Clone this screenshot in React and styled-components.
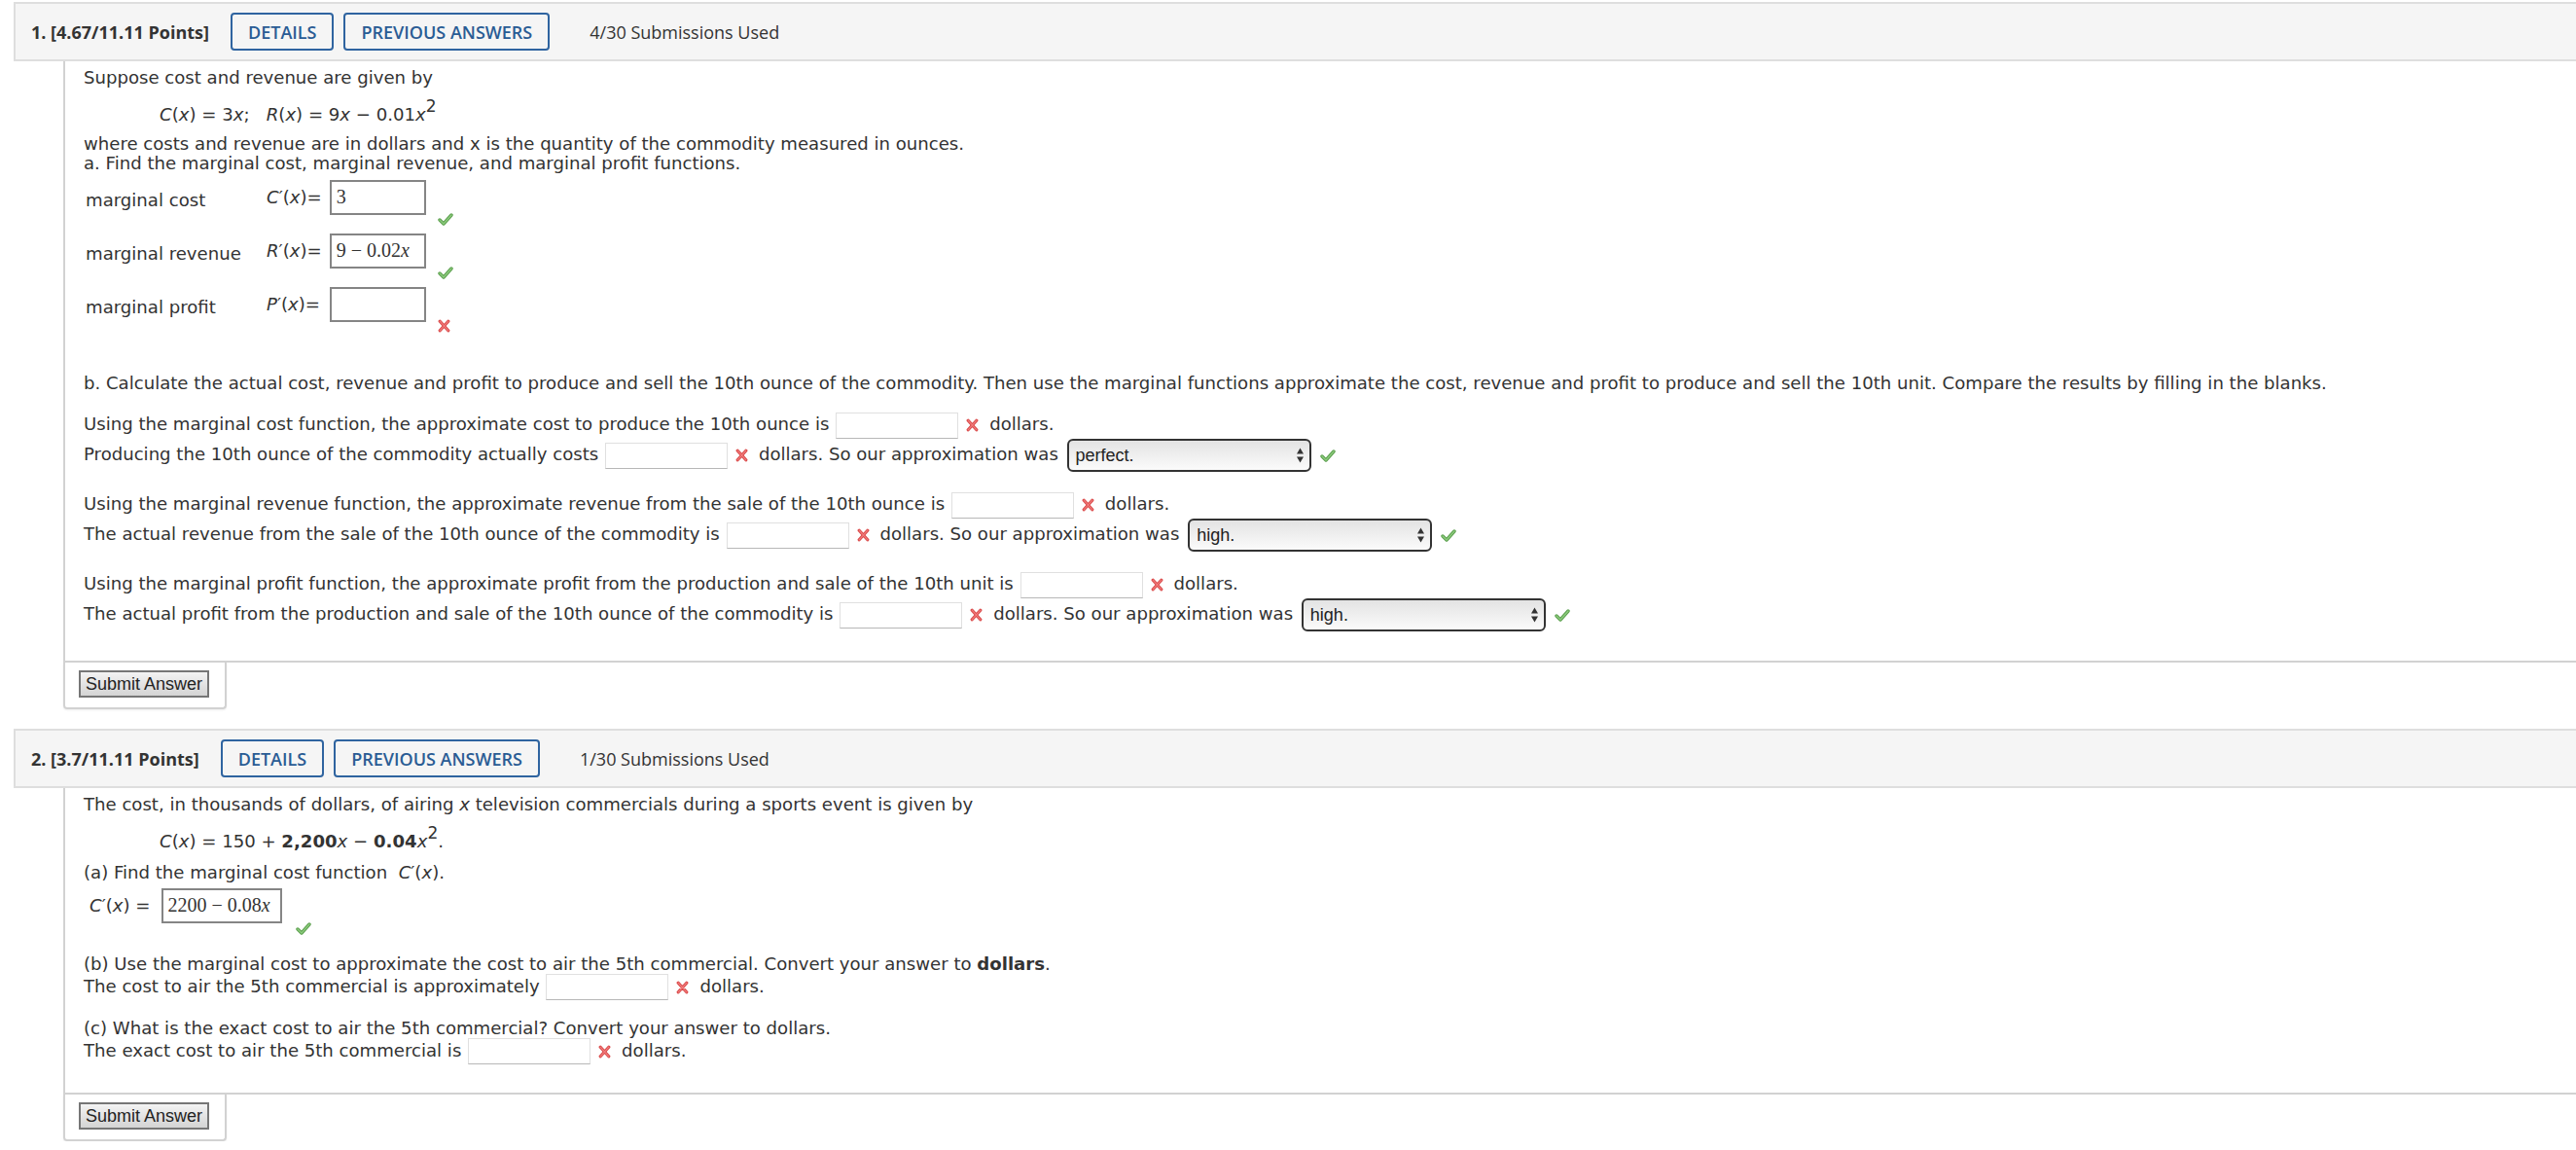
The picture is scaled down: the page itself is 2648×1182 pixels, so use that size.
import React from "react";
import styled, { createGlobalStyle } from "styled-components";

const GlobalStyle = createGlobalStyle`
  html, body {
    margin: 0;
    padding: 0;
    background: #fff;
    overflow-x: hidden;
  }
  body {
    font-family: "DejaVu Sans", Verdana, sans-serif;
    font-size: 18.1px;
    line-height: 20px;
    color: #333;
  }
`;

const Page = styled.div`
  padding: 2px 0 0 14px;
  display: flex;
  flex-direction: column;
  gap: 20px;
`;

const Question = styled.section`
  width: calc(100% + 40px);
`;

// question header bar
const QHeader = styled.div`
  display: flex;
  align-items: center;
  background: #f5f5f5;
  border: 2px solid #dedede;
  padding: 9px 16px;
  font-family: "Open Sans", "Liberation Sans", sans-serif;
  font-size: 18px;
  color: #333;
`;

const QTitle = styled.span`
  font-weight: 700;
  margin-right: 22px;
`;

const HeaderButton = styled.button`
  height: 39px;
  padding: 0 16px;
  margin-right: 10px;
  border: 2px solid #2f64a0;
  border-radius: 4px;
  background: transparent;
  font-family: "Open Sans", "Liberation Sans", sans-serif;
  font-weight: 600;
  font-size: 18px;
  color: #2a5c94;
`;

const Submissions = styled.span`
  margin-left: 31px;
`;

const QBody = styled.div`
  margin-left: 51px;
  border-left: 2px solid #d2d2d2;
  border-bottom: 2px solid #d2d2d2;
  padding: ${(p) => p.$pt}px 0 ${(p) => p.$pb}px 19px;
`;

const QFooter = styled.div`
  margin-left: 51px;
  width: fit-content;
  border: 2px solid #d2d2d2;
  border-top: none;
  border-radius: 0 0 4px 4px;
  padding: 8px 16px 10px 14px;
  box-shadow: 0 1px 2px rgba(0, 0, 0, 0.08);
`;

const SubmitButton = styled.button`
  display: block;
  height: 28px;
  padding: 0 5px;
  border: 2px solid #767676;
  background: linear-gradient(#f3f3f3, #d4d4d4);
  font-family: "Liberation Sans", Arial, sans-serif;
  font-size: 18px;
  color: #222;
`;

const Para = styled.p`
  margin: ${(p) => p.$mt || 0}px 0 ${(p) => p.$mb || 0}px;
`;

const Formula = styled.div`
  padding-left: 78px;
  margin: ${(p) => p.$mt}px 0 ${(p) => p.$mb}px;
  white-space: pre;
`;

const Var = styled.i`
  font-style: italic;
`;

const Bold = styled.b`
  font-weight: 700;
`;

const Sup = styled.span`
  font-size: 17px;
  line-height: 0;
  vertical-align: 9px;
`;

// part a: label / function / math box / mark
const FnGrid = styled.div`
  display: grid;
  grid-template-columns: 188px auto auto auto;
  justify-content: start;
  align-items: start;
  row-gap: 8px;
  margin: ${(p) => p.$mt}px 0 ${(p) => p.$mb}px;
`;

const FnRow = styled.div`
  display: flex;
  align-items: flex-start;
  margin: ${(p) => p.$mt}px 0 ${(p) => p.$mb || 0}px;
`;

const FnLabel = styled.span`
  line-height: 36px;
  padding: 3px 0 0 2px;
`;

const FnName = styled.span`
  line-height: 36px;
  padding: 0 ${(p) => p.$pr || 8}px 0 ${(p) => p.$pl || 0}px;
  white-space: pre;
`;

const MathBox = styled.span`
  box-sizing: border-box;
  width: ${(p) => p.$w}px;
  height: 36px;
  border: 2px solid #858585;
  padding: 0 5px;
  font-family: "Liberation Serif", "DejaVu Serif", serif;
  font-size: 20px;
  line-height: 30px;
  color: #333;
  white-space: pre;
`;

const FnMark = styled.span`
  display: flex;
  align-items: center;
  height: 14px;
  margin: ${(p) => p.$mt || 33}px 0 0 ${(p) => p.$ml || 12}px;
`;

const Group = styled.div`
  margin-top: ${(p) => p.$mt}px;
`;

const Line = styled.div`
  line-height: ${(p) => p.$lh || 30}px;
  white-space: nowrap;
`;

const Blank = styled.span`
  display: inline-block;
  vertical-align: middle;
  box-sizing: border-box;
  width: ${(p) => p.$w || 126}px;
  height: 27px;
  border: 1px solid #e0e0e0;
  border-bottom-color: #b7b7b7;
  background: #fff;
  margin-left: 1px;
`;

const InlineMark = styled.span`
  display: inline-block;
  vertical-align: middle;
  line-height: 0;
  margin: 0 ${(p) => p.$mr || 0}px 0 ${(p) => p.$ml || 0}px;
`;

const SelectBox = styled.span`
  display: inline-flex;
  align-items: center;
  justify-content: space-between;
  vertical-align: middle;
  box-sizing: border-box;
  width: 251px;
  height: 34px;
  margin-left: 3px;
  padding: 0 5px 0 7px;
  border: 2px solid #333;
  border-radius: 6px;
  background: linear-gradient(#e3e3e3, #fbfbfb);
  font-family: "Liberation Sans", Arial, sans-serif;
  font-size: 18px;
  line-height: 1;
  color: #222;
`;

function Check() {
  return (
    <svg width="16" height="13" viewBox="0 0 16 13">
      <path d="M2 7 L6 11 L14 2" fill="none" stroke="#5b9f4d" strokeWidth="3.4" strokeLinecap="round" strokeLinejoin="round" />
      <path d="M2 7 L6 11 L14 2" fill="none" stroke="#8ccb7d" strokeWidth="1.4" strokeLinecap="round" strokeLinejoin="round" />
    </svg>
  );
}

function Cross() {
  return (
    <svg width="13" height="14" viewBox="0 0 13 14">
      <path d="M2.2 2.2 L10.8 11.8 M10.8 2.2 L2.2 11.8" fill="none" stroke="#d94a4a" strokeWidth="3.2" strokeLinecap="round" />
      <path d="M2.2 2.2 L10.8 11.8 M10.8 2.2 L2.2 11.8" fill="none" stroke="#f27c7c" strokeWidth="1.2" strokeLinecap="round" />
    </svg>
  );
}

function Arrows() {
  return (
    <svg width="9" height="18" viewBox="0 0 9 18">
      <path d="M1 7.5 L4.5 1.5 L8 7.5 Z M1 10.5 L4.5 16.5 L8 10.5 Z" fill="#333" />
    </svg>
  );
}

function Answer({ w }) {
  return (
    <>
      <Blank $w={w} />
      <InlineMark $ml={8} $mr={11}>
        <Cross />
      </InlineMark>
    </>
  );
}

function Choice({ value }) {
  return (
    <>
      <SelectBox>
        <span>{value}</span>
        <Arrows />
      </SelectBox>
      <InlineMark $ml={9}>
        <Check />
      </InlineMark>
    </>
  );
}

function Header({ title, used }) {
  return (
    <QHeader>
      <QTitle>{title}</QTitle>
      <HeaderButton>DETAILS</HeaderButton>
      <HeaderButton>PREVIOUS ANSWERS</HeaderButton>
      <Submissions>{used}</Submissions>
    </QHeader>
  );
}

function Footer() {
  return (
    <QFooter>
      <SubmitButton>Submit Answer</SubmitButton>
    </QFooter>
  );
}

const fnRows = [
  { label: "marginal cost", fn: "C", value: "3", ok: true },
  { label: "marginal revenue", fn: "R", value: "9 \u2212 0.02", x: true, ok: true },
  { label: "marginal profit", fn: "P", value: "", ok: false },
];

function QuestionOne() {
  return (
    <Question>
      <Header title="1.  [4.67/11.11 Points]" used="4/30 Submissions Used" />
      <QBody $pt={7} $pb={30}>
        <Para>Suppose cost and revenue are given by</Para>
        <Formula $mt={18} $mb={10}>
          <Var>C</Var>(<Var>x</Var>) = 3<Var>x</Var>;   <Var>R</Var>(<Var>x</Var>) = 9<Var>x</Var> {"\u2212"} 0.01<Var>x</Var>
          <Sup>2</Sup>
        </Formula>
        <Para>
          where costs and revenue are in dollars and x is the quantity of the commodity measured in ounces.
          <br />
          a. Find the marginal cost, marginal revenue, and marginal profit functions.
        </Para>
        <FnGrid $mt={7} $mb={42}>
          {fnRows.map((r) => (
            <React.Fragment key={r.fn}>
              <FnLabel>{r.label}</FnLabel>
              <FnName>
                <Var>{r.fn}</Var>′(<Var>x</Var>)=
              </FnName>
              <MathBox $w={99}>
                {r.value}
                {r.x && <i>x</i>}
              </MathBox>
              <FnMark>{r.ok ? <Check /> : <Cross />}</FnMark>
            </React.Fragment>
          ))}
        </FnGrid>
        <Para>
          b. Calculate the actual cost, revenue and profit to produce and sell the 10th ounce of the commodity. Then use
          the marginal functions approximate the cost, revenue and profit to produce and sell the 10th unit. Compare the
          results by filling in the blanks.
        </Para>
        <Group $mt={17}>
          <Line>
            Using the marginal cost function, the approximate cost to produce the 10th ounce is <Answer />
            dollars.
          </Line>
          <Line>
            Producing the 10th ounce of the commodity actually costs <Answer />
            dollars. So our approximation was <Choice value="perfect." />
          </Line>
        </Group>
        <Group $mt={18}>
          <Line>
            Using the marginal revenue function, the approximate revenue from the sale of the 10th ounce is <Answer />
            dollars.
          </Line>
          <Line>
            The actual revenue from the sale of the 10th ounce of the commodity is <Answer />
            dollars. So our approximation was <Choice value="high." />
          </Line>
        </Group>
        <Group $mt={18}>
          <Line>
            Using the marginal profit function, the approximate profit from the production and sale of the 10th unit
            is <Answer />
            dollars.
          </Line>
          <Line>
            The actual profit from the production and sale of the 10th ounce of the commodity is <Answer />
            dollars. So our approximation was <Choice value="high." />
          </Line>
        </Group>
      </QBody>
      <Footer />
    </Question>
  );
}

function QuestionTwo() {
  return (
    <Question>
      <Header title="2.  [3.7/11.11 Points]" used="1/30 Submissions Used" />
      <QBody $pt={7} $pb={29}>
        <Para>
          The cost, in thousands of dollars, of airing <Var>x</Var> television commercials during a sports event is
          given by
        </Para>
        <Formula $mt={18} $mb={12}>
          <Var>C</Var>(<Var>x</Var>) = 150 + <Bold>2,200</Bold>
          <Var>x</Var> {"\u2212"} <Bold>0.04</Bold>
          <Var>x</Var>
          <Sup>2</Sup>.
        </Formula>
        <Para>
          (a) Find the marginal cost function{"\u00a0 "}
          <Var>C</Var>′(<Var>x</Var>).
        </Para>
        <FnRow $mt={6}>
          <FnName $pl={6} $pr={11}>
            <Var>C</Var>′(<Var>x</Var>) =
          </FnName>
          <MathBox $w={124}>
            2200 {"\u2212"} 0.08<i>x</i>
          </MathBox>
          <FnMark $ml={14} $mt={34}>
            <Check />
          </FnMark>
        </FnRow>
        <Para $mt={20}>
          (b) Use the marginal cost to approximate the cost to air the 5th commercial. Convert your answer to{" "}
          <Bold>dollars</Bold>.
        </Para>
        <Line $lh={22}>
          The cost to air the 5th commercial is approximately <Answer />
          dollars.
        </Line>
        <Para $mt={19}>(c) What is the exact cost to air the 5th commercial? Convert your answer to dollars.</Para>
        <Line $lh={22}>
          The exact cost to air the 5th commercial is <Answer />
          dollars.
        </Line>
      </QBody>
      <Footer />
    </Question>
  );
}

export default function App() {
  return (
    <>
      <GlobalStyle />
      <Page>
        <QuestionOne />
        <QuestionTwo />
      </Page>
    </>
  );
}
